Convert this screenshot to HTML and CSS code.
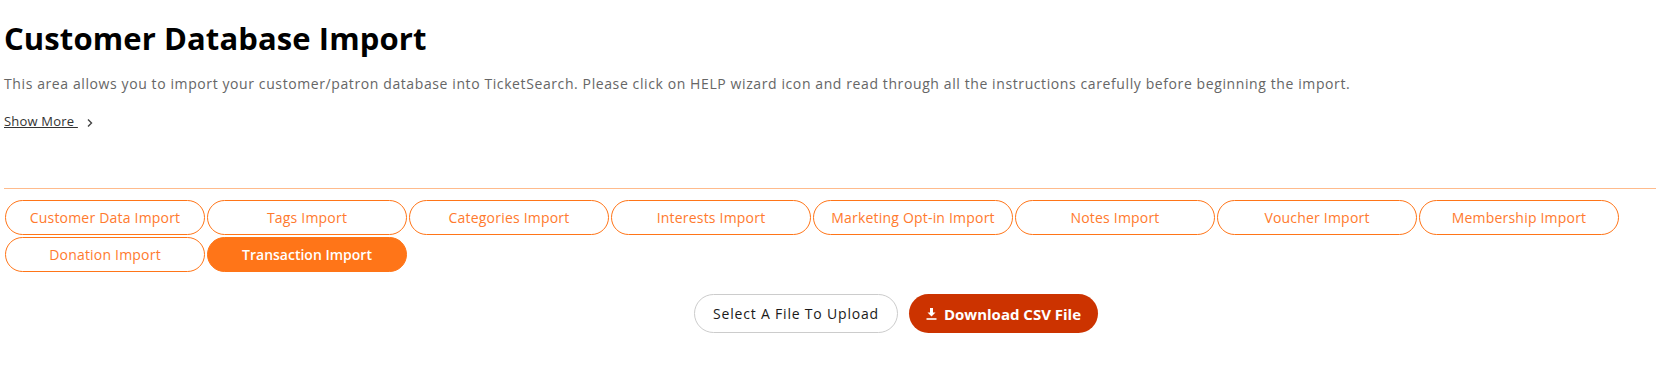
FILE: index.html
```html
<!DOCTYPE html>
<html>
<head>
<meta charset="utf-8">
<link rel="stylesheet" href="styles.css">
</head>
<body>
<div class="page">
  <h1 class="title">Customer Database Import</h1>
  <p class="desc">This area allows you to import your customer/patron database into TicketSearch. Please click on HELP wizard icon and read through all the instructions carefully before beginning the import.</p>
  <div class="more-row"><a class="more">Show More&nbsp;</a><span class="chev"><svg width="8" height="10" viewBox="0 0 8 10"><path d="M2 1.5 L5.5 5 L2 8.5" fill="none" stroke="#444" stroke-width="1.4"/></svg></span></div>
  <hr class="sep">
  <div class="tabs">
    <button class="tab">Customer Data Import</button>
    <button class="tab">Tags Import</button>
    <button class="tab">Categories Import</button>
    <button class="tab">Interests Import</button>
    <button class="tab">Marketing Opt-in Import</button>
    <button class="tab">Notes Import</button>
    <button class="tab">Voucher Import</button>
    <button class="tab">Membership Import</button>
    <button class="tab">Donation Import</button>
    <button class="tab active">Transaction Import</button>
  </div>
  <div class="actions">
    <button class="btn-upload">Select A File To Upload</button>
    <button class="btn-download"><svg width="11" height="12" viewBox="0 0 11 12"><path d="M4 0 H7 V4.5 H9.5 L5.5 8.5 L1.5 4.5 H4 Z" fill="#fff"/><rect x="0.5" y="10.2" width="10" height="1.6" fill="#fff"/></svg><span>Download CSV File</span></button>
  </div>
</div>
</body>
</html>
```

FILE: styles.css
```css
html, body {
  margin: 0;
  padding: 0;
  background: #fff;
}
body {
  font-family: "Open Sans", "Liberation Sans", sans-serif;
}
.page {
  padding: 0 0 0 4px;
}
.title {
  margin: 0;
  padding-top: 20px;
  font-size: 31px;
  font-weight: 700;
  color: #000;
  line-height: 36px;
  letter-spacing: 0.1px;
}
.desc {
  margin: 18px 0 0 0;
  font-size: 14px;
  line-height: 20px;
  color: #666;
  letter-spacing: 0.6px;
}
.more-row {
  display: flex;
  align-items: center;
  margin-top: 18px;
  height: 18px;
}
.more {
  font-size: 13px;
  line-height: 18px;
  color: #333;
  text-decoration: underline;
  letter-spacing: 0.2px;
}
.chev {
  display: inline-flex;
  margin-left: 8px;
  margin-top: 3px;
}
.sep {
  margin: 58px 0 0 0;
  border: 0;
  border-top: 1px solid #ffbb8c;
  height: 0;
}
.tabs {
  display: flex;
  flex-wrap: wrap;
  gap: 2px 2px;
  width: 1620px;
  margin-top: 11px;
  padding-left: 1px;
}
.tab {
  width: 200px;
  height: 35px;
  border: 1px solid #ff7518;
  border-radius: 18px;
  background: #fff;
  color: #ff7a2e;
  font-family: "Open Sans", "Liberation Sans", sans-serif;
  font-size: 14px;
  letter-spacing: 0.2px;
  padding: 0;
  cursor: pointer;
}
.tab.active {
  background: #ff7518;
  color: #fff;
  font-weight: 600;
  letter-spacing: 0;
}
.actions {
  display: flex;
  justify-content: center;
  gap: 11px;
  margin-top: 22px;
  padding-left: 132px;
}
.btn-upload {
  width: 204px;
  height: 39px;
  border: 1px solid #ccc;
  border-radius: 20px;
  background: #fff;
  color: #1a1a1a;
  font-family: "Open Sans", "Liberation Sans", sans-serif;
  font-size: 14px;
  font-weight: 500;
  letter-spacing: 0.8px;
  padding: 0;
}
.btn-download {
  width: 189px;
  height: 39px;
  border: 0;
  border-radius: 20px;
  background: #cc3300;
  color: #fff;
  font-family: "Open Sans", "Liberation Sans", sans-serif;
  font-size: 15px;
  font-weight: 700;
  display: inline-flex;
  align-items: center;
  justify-content: center;
  gap: 7px;
  padding: 0;
}
```
